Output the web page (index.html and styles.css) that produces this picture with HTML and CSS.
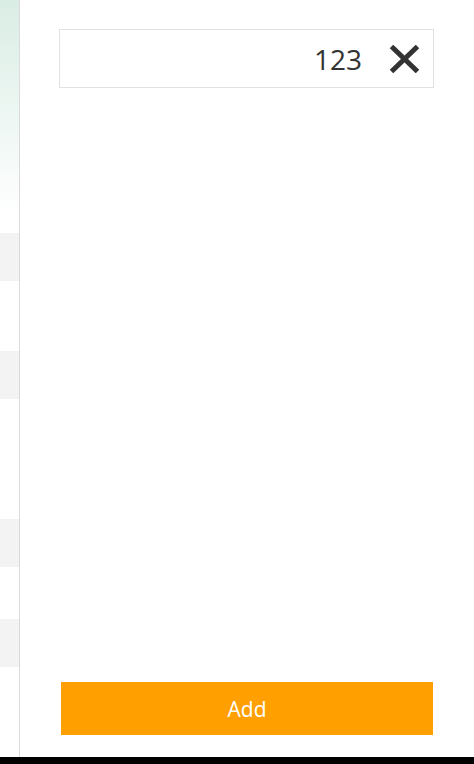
FILE: index.html
```html
<!DOCTYPE html>
<html>
<head>
<meta charset="utf-8">
<link rel="stylesheet" href="styles.css">
</head>
<body>
<div class="page">
  <aside class="side">
    <div class="blk b1"></div>
    <div class="blk b2"></div>
    <div class="blk b3"></div>
    <div class="blk b4"></div>
  </aside>
  <main class="main">
    <div class="field">
      <span class="value">123</span>
      <svg class="clear" width="31" height="28" viewBox="0 0 31 28">
        <line x1="2.5" y1="1.5" x2="28.5" y2="26.5" stroke="#333" stroke-width="5"/>
        <line x1="28.5" y1="1.5" x2="2.5" y2="26.5" stroke="#333" stroke-width="5"/>
      </svg>
    </div>
    <div class="spacer"></div>
    <button class="add">Add</button>
  </main>
</div>
<div class="bottom"></div>
</body>
</html>
```
FILE: styles.css
```css
html, body {
  margin: 0;
  padding: 0;
  background: #fff;
  font-family: "Open Sans", "Liberation Sans", sans-serif;
}
.page {
  display: flex;
  height: 757px;
}
.side {
  width: 19px;
  border-right: 1px solid #dadada;
  background: linear-gradient(#daede5 0px, #eef7f3 120px, #fff 215px);
  display: flex;
  flex-direction: column;
}
.blk {
  height: 48px;
  background: #f3f3f3;
}
.b1 { margin-top: 233px; }
.b2 { margin-top: 70px; }
.b3 { margin-top: 120px; }
.b4 { margin-top: 52px; }
.main {
  flex: 1;
  display: flex;
  flex-direction: column;
}
.field {
  margin: 29px 40px 0 39px;
  height: 57px;
  border: 1px solid #e2e2e2;
  display: flex;
  align-items: center;
  justify-content: flex-end;
  padding-right: 13px;
}
.value {
  font-size: 28px;
  color: #333;
  margin-right: 27px;
  line-height: 1;
}
.clear {
  display: block;
}
.spacer { flex: 1; }
.add {
  margin: 0 41px 22px 41px;
  height: 53px;
  border: none;
  background: #ffa000;
  color: #fff;
  font-family: "Open Sans", "Liberation Sans", sans-serif;
  font-size: 21px;
  padding: 0;
}
.bottom {
  height: 7px;
  background: #000;
}
```
